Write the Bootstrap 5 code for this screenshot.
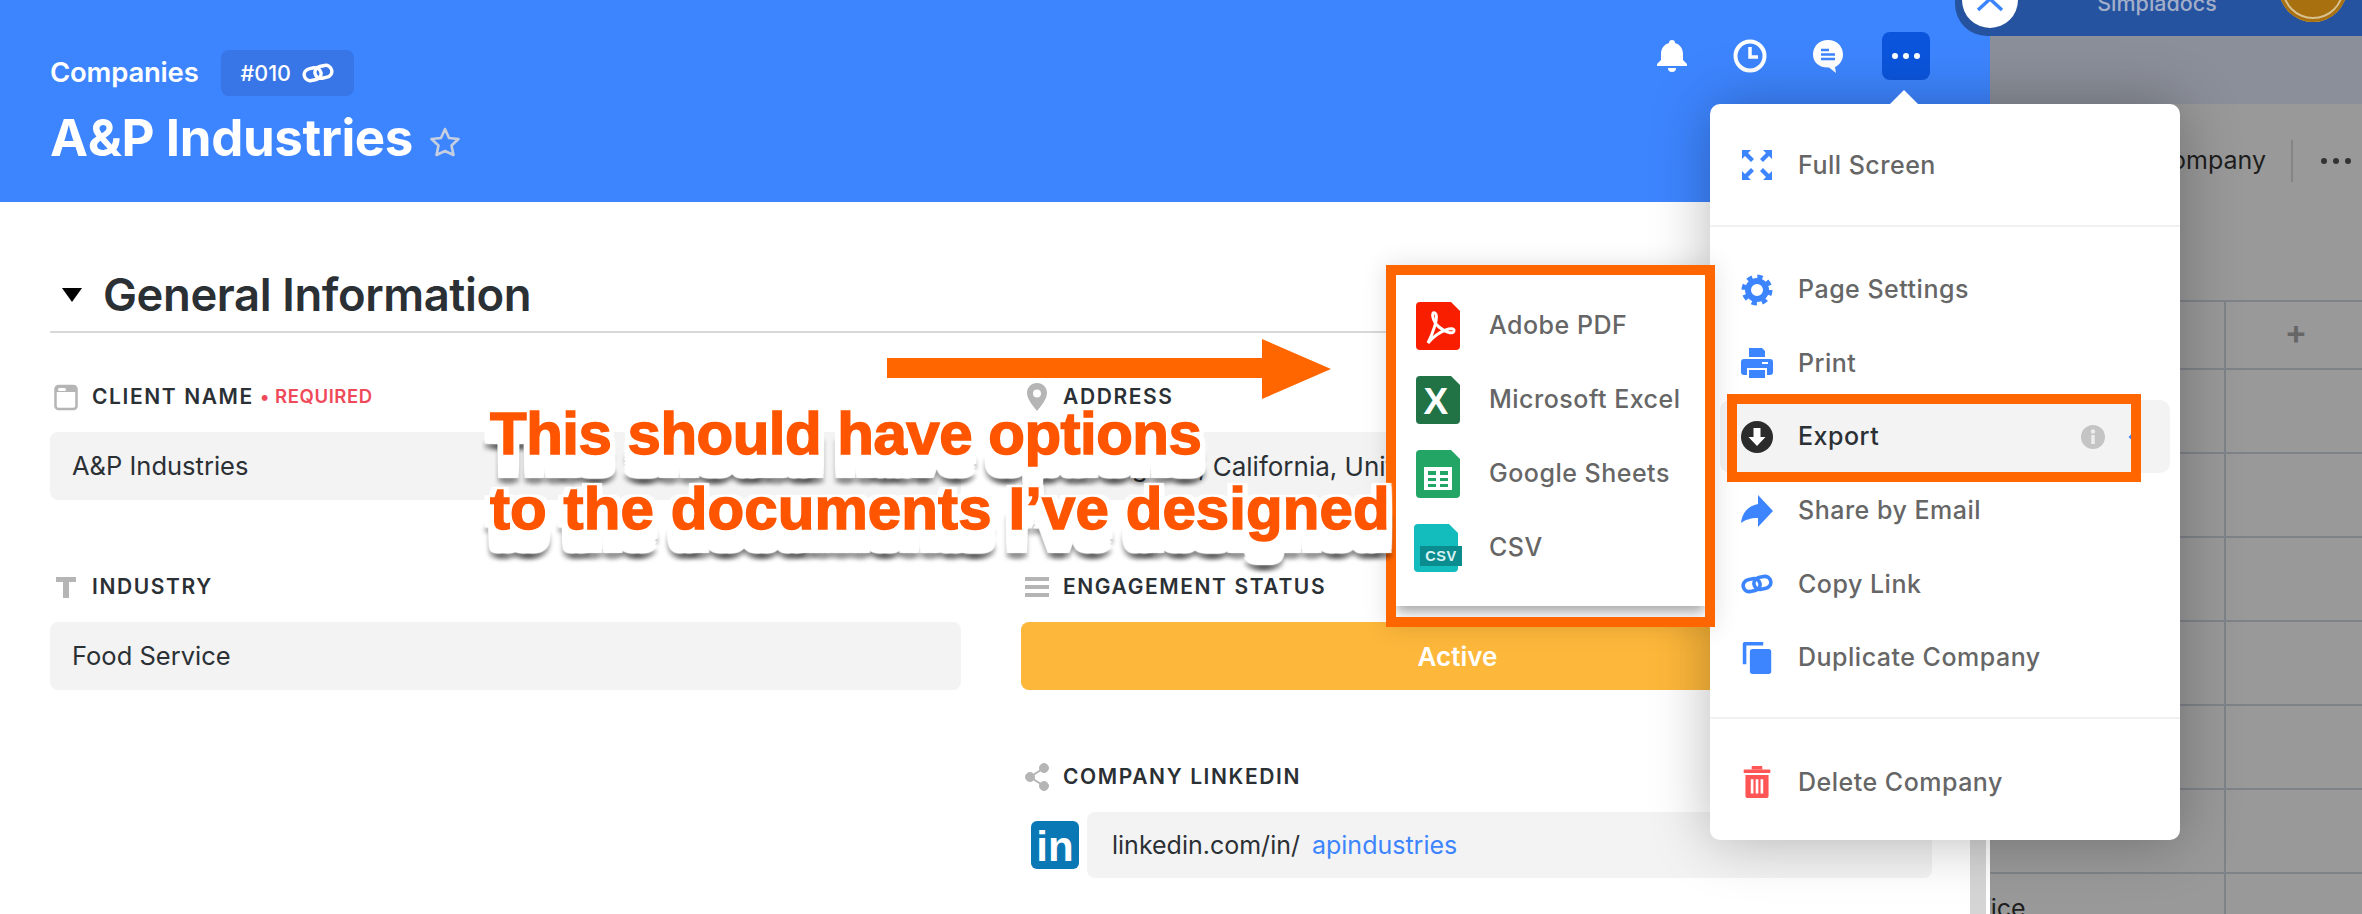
<!DOCTYPE html>
<html lang="en">
<head>
<meta charset="utf-8">
<title>A&amp;P Industries</title>
<link href="https://cdn.jsdelivr.net/npm/bootstrap@5.3.0/dist/css/bootstrap.min.css" rel="stylesheet">
<style>
body{margin:0;background:#999;font-family:Inter,"Liberation Sans",sans-serif;overflow:hidden}
.stage{position:relative;width:2362px;height:914px;overflow:hidden}
.sheet-panel{width:1990px;background:#fff;flex:none}
.sheet-head{height:202px;flex:none;background:#3d85ff;padding:32px 60px 0 50px;color:#fff}
.crumb-row{margin-top:18px}
.crumb{font-size:27.5px;font-weight:600;letter-spacing:-.2px}
.ref-tag{height:46px;background:#3875e6;border-radius:8px;padding:0 20px;font-size:21.5px;font-weight:500;margin-left:22px}
.ref-tag svg{margin-left:3px}
.page-title{font-size:51px;line-height:60px;font-weight:700;margin:12px 0 0;letter-spacing:-.4px}
.title-star{margin:8px 0 0 16px}
.head-ico{width:78px;height:48px}
.dots-btn{width:48px;height:48px;background:#0b55dd;border:0;border-radius:8px;padding:0;margin-left:15px}
.sheet-body{padding:66px 0 0 50px;flex:1;min-width:0}
.sec-title{font-size:45.4px;line-height:54px;font-weight:600;color:#2b3035;letter-spacing:-.4px;margin:0;padding-bottom:9px;border-bottom:2px solid #d8d8d8}
.sec-tri{width:20px;height:14px;margin:0 21px 0 12px}
.gen-row{--bs-gutter-x:60px;--bs-gutter-y:0;margin-top:50px}
.fld{height:190px}
.fld-label{height:28px;margin-bottom:21px;padding-left:4px;font-size:21px;font-weight:600;letter-spacing:1.6px;color:#2b3035;text-transform:uppercase}
.fld-label svg{width:24px;height:28px;margin-right:14px;flex:none}
.req{color:#ef4a5a;font-size:18.500px;font-weight:600;letter-spacing:.6px;margin-left:6px}
.fake-input{height:68px;background:#f3f3f3;border:0;border-radius:8px;padding:0 22px;font-size:25.5px;color:#2b3035}
.fake-input.addr{padding-left:26px;font-size:26px}
.fake-input.li-box{height:66px;padding-left:25px;padding-top:2px;font-size:25px;gap:12px}
.status-btn{height:68px;background:#fdb73a;color:#fff;font-size:26px;font-weight:600;border:0;border-radius:8px;padding:0 38px 0 0}
.status-btn:hover{background:#fdb73a;color:#fff}
.li-ico{width:48px;height:48px;margin:0 8px 0 10px;flex:none}
.li-handle{color:#3d85ff}
.track{width:16px;margin-left:38px;margin-right:4px;background:#d5d5d5;flex:none}
.back-col{flex:1;min-width:0;background:#999;overflow:hidden}
.back-strip{height:104px;background:#8b8f99;flex:none}
.back-tools{height:196px;flex:none;padding:0 10px 82px 0;font-size:25px;color:#1e1e1e}
.tool-sep{width:2px;height:42px;background:#858585;margin:0 27px 0 25px}
.grid-line{display:flex;flex:none;height:84px;border-top:2px solid #7e838a}
.grid-line.first{height:68px}
.grid-line.last{flex:1 0 auto;height:auto}
.grid-a{width:236px;border-right:2px solid #7e838a;flex:none;font-size:25px;color:#1e1e1e}
.grid-a.off{padding-top:16px;text-indent:-36px;white-space:nowrap}
.grid-b{flex:1;font-size:34px;color:#666;font-weight:600;line-height:1}
.grid-b.plus{padding:0 0 6px 4px}
.top-bar{position:absolute;left:1955px;top:0;width:407px;height:36px;background:#2553a0;border-bottom-left-radius:32px}
.top-close{position:absolute;left:7px;top:-28px;width:56px;height:56px;border-radius:50%;background:#fff;padding-bottom:16px}
.top-name{position:absolute;left:122px;top:-13px;width:160px;text-align:center;font-size:21.500px;font-weight:500;line-height:32px;color:#a2aec8}
.top-ava{position:absolute;left:324px;top:-46px;width:68px;height:68px;border-radius:50%;background:#a8700f;box-shadow:inset 0 0 0 3px #a8700f,inset 0 0 0 5px #d9c08f}
.act-menu{position:absolute;left:1710px;top:104px;width:470px;height:736px;display:block;margin:0;padding:24px 0 0;border:0;border-radius:10px;box-shadow:0 0 60px rgba(0,0,0,.28)}
.act-menu::before{content:"";position:absolute;left:180px;top:-14px;border:14px solid transparent;border-top:0;border-bottom-color:#fff}
.act-item{height:73.6px;padding:1px 21px 0;margin:0 10px;width:auto;font-size:25px;letter-spacing:.5px;font-weight:500;color:#666;border-radius:10px}
.act-item svg{width:32px;height:32px;flex:none;margin-right:25px}
.act-item.on{background:#f3f3f3;color:#2b3035}
.act-item.on .ml{margin-left:auto;margin-right:23px;width:24px;height:24px}
.act-item.on .ch{margin:0 13px 0 0;width:8px;height:12px}
.act-rule{margin:23px 0 26px;border-top:2px solid #f1f1f1;opacity:1}
.sub-frame{position:absolute;z-index:1002;left:1386px;top:265px;width:329px;height:362px;border:10px solid #ff6600;background:#fff;overflow:hidden;box-shadow:0 0 24px rgba(0,0,0,.12)}
.sub-list{height:331px;background:#fff;box-shadow:0 6px 12px rgba(0,0,0,.35);padding-top:13px}
.sub-item{height:74px;padding:2px 0 0 18px;font-size:25px;letter-spacing:.5px;font-weight:500;color:#666}
.sub-item svg{width:44px;height:48px;flex:none;margin:0 29px 0 2px}
.sub-item svg.wide{width:48px;margin:0 27px 0 0}
.exp-frame{position:absolute;z-index:1001;left:1727px;top:394px;width:414px;height:88px;border:10px solid #ff6600;pointer-events:none}
.note-arrow{position:absolute;z-index:1003;left:887px;top:339px;width:444px;height:60px}
.note-text{position:absolute;z-index:1003;left:490px;top:396px;margin:0;font-family:"Liberation Sans",Arial,sans-serif;font-weight:700;font-size:60px;line-height:75px;color:#ff5500;white-space:nowrap;-webkit-text-stroke:1.5px #ff5500;
text-shadow:-6px -3px 1px #fff,-3px -3px 1px #fff,3px -3px 1px #fff,6px -3px 1px #fff,
-6px 0 1px #fff,-3px 0 1px #fff,3px 0 1px #fff,6px 0 1px #fff,
-6px 4px 1px #fff,-3px 4px 1px #fff,3px 4px 1px #fff,6px 4px 1px #fff,
-6px 8px 1px #fff,-3px 8px 1px #fff,3px 8px 1px #fff,6px 8px 1px #fff,
-6px 12px 1px #fff,-3px 12px 1px #fff,3px 12px 1px #fff,6px 12px 1px #fff,
-6px 16px 1px #fff,-3px 16px 1px #fff,3px 16px 1px #fff,6px 16px 1px #fff,
-6px 20px 1px #fff,-3px 20px 1px #fff,3px 20px 1px #fff,6px 20px 1px #fff,
-6px 24px 1px #fff,-3px 24px 1px #fff,3px 24px 1px #fff,6px 24px 1px #fff,
-6px 29px 4px rgba(0,0,0,.35),0 30px 4px rgba(0,0,0,.35),6px 29px 4px rgba(0,0,0,.35)}
.note-a{letter-spacing:-.5px}
.note-b{letter-spacing:.1px}
</style>
</head>
<body>
<div class="stage d-flex">
  <section class="sheet-panel d-flex flex-column">
    <header class="sheet-head d-flex justify-content-between">
      <div>
        <div class="d-flex align-items-center crumb-row">
          <div class="crumb">Companies</div>
          <div class="ref-tag d-flex align-items-center gap-2">#010
            <svg width="32" height="20" viewBox="0 0 32 20" fill="none" stroke="#fff" stroke-width="3.4"><g transform="rotate(-12 16 10)"><rect x="2" y="4" width="17" height="12" rx="6"/><rect x="13" y="4" width="17" height="12" rx="6"/></g></svg>
          </div>
        </div>
        <h1 class="page-title d-flex align-items-center">A&amp;P Industries
          <svg class="title-star" width="32" height="34" viewBox="0 0 32 32" fill="none" stroke="#c6cfdf" stroke-width="2.6" stroke-linejoin="round"><path d="M16 3l4 9 9.500 1-7 6.500 2 9.500L16 25l-8.500 4 2-9.500-7-6.500 9.500-1z"/></svg>
        </h1>
      </div>
      <div class="d-flex align-items-center align-self-start">
        <div class="head-ico d-flex align-items-center justify-content-center"><svg width="34" height="34" viewBox="0 0 34 34" fill="#fff"><path d="M17 1a3 3 0 0 1 3 3c5 1.500 8 5.500 8 11v6l4 4v2H2v-2l4-4v-6c0-5.500 3-9.500 8-11a3 3 0 0 1 3-3z"/><path d="M13 29h8a4 4 0 0 1-8 0z"/></svg></div>
        <div class="head-ico d-flex align-items-center justify-content-center"><svg width="34" height="34" viewBox="0 0 34 34" fill="none" stroke="#fff" stroke-width="4"><circle cx="17" cy="17" r="14.500"/><path d="M17 8v10h8" stroke-width="3.500"/></svg></div>
        <div class="head-ico d-flex align-items-center justify-content-center"><svg width="32" height="34" viewBox="0 0 32 34"><path fill="#fff" d="M16 1c8.500 0 15 6 15 14.500 0 6-3.500 10.500-8 12.500l1 6-7-5.500C8 29 1 24 1 15.500 1 7 7.500 1 16 1z"/><path d="M9 11h8M9 15.500h14M9 20h14" stroke="#3d85ff" stroke-width="2.400"/></svg></div>
        <button class="dots-btn d-flex align-items-center justify-content-center" type="button" aria-label="More"><svg width="30" height="8" viewBox="0 0 30 8" fill="#fff"><circle cx="4" cy="4" r="3"/><circle cx="15" cy="4" r="3"/><circle cx="26" cy="4" r="3"/></svg></button>
      </div>
    </header>
    <div class="d-flex flex-grow-1 position-relative">
      <div class="sheet-body">
        <h2 class="sec-title d-flex align-items-center"><svg class="sec-tri" viewBox="0 0 20 14"><path d="M0 0h20L10 14z" fill="#000"/></svg>General Information</h2>
        <div class="row gen-row">
          <div class="col-6 fld">
            <div class="fld-label d-flex align-items-center"><svg viewBox="0 0 24 28" fill="none"><rect x="1.500" y="3" width="21" height="23" rx="3" stroke="#b5b5b5" stroke-width="2.500"/><path d="M2 9V5a2 2 0 0 1 2-2h16a2 2 0 0 1 2 2v4z" fill="#b5b5b5"/><rect x="4" y="5" width="8" height="3" rx="1.500" fill="#fff"/></svg>Client Name<span class="req">• REQUIRED</span></div>
            <div class="fake-input d-flex align-items-center">A&amp;P Industries</div>
          </div>
          <div class="col-6 fld">
            <div class="fld-label d-flex align-items-center"><svg viewBox="0 0 24 28"><path fill="#b5b5b5" fill-rule="evenodd" d="M12 0c6 0 10 4.500 10 10 0 6-6 13-10 18C8 23 2 16 2 10 2 4.500 6 0 12 0zm0 6.500a4 4 0 1 0 0 8 4 4 0 0 0 0-8z"/></svg>Address</div>
            <div class="fake-input addr d-flex align-items-center">Los Angeles, California, United States</div>
          </div>
          <div class="col-6 fld">
            <div class="fld-label d-flex align-items-center"><svg viewBox="0 0 24 28" fill="#b5b5b5"><rect x="2" y="4" width="20" height="5"/><rect x="9" y="4" width="6" height="21"/></svg>Industry</div>
            <div class="fake-input d-flex align-items-center">Food Service</div>
          </div>
          <div class="col-6 fld">
            <div class="fld-label d-flex align-items-center"><svg viewBox="0 0 24 28" fill="#b5b5b5"><rect y="4" width="24" height="4"/><rect y="12" width="24" height="4"/><rect y="20" width="24" height="4"/></svg>Engagement Status</div>
            <button class="btn status-btn w-100" type="button">Active</button>
          </div>
          <div class="col-6 fld"></div>
          <div class="col-6 fld">
            <div class="fld-label d-flex align-items-center"><svg viewBox="0 0 24 28" fill="#b5b5b5" stroke="#b5b5b5"><circle cx="19" cy="5" r="4.500"/><circle cx="5" cy="14" r="4.500"/><circle cx="19" cy="23" r="4.500"/><path d="M19 5L5 14l14 9" fill="none" stroke-width="2"/></svg>Company LinkedIn</div>
            <div class="d-flex align-items-center">
              <svg class="li-ico" viewBox="0 0 48 48"><rect width="48" height="48" rx="6" fill="#0a78b5"/><text x="24" y="40" text-anchor="middle" font-family="Liberation Sans" font-weight="700" font-size="42" fill="#fff">in</text></svg>
              <div class="fake-input li-box d-flex align-items-center flex-grow-1">linkedin.com/in/<span class="li-handle">apindustries</span></div>
            </div>
          </div>
        </div>
      </div>
      <div class="track"></div>
    </div>
  </section>
  <aside class="back-col d-flex flex-column">
    <div class="back-strip"></div>
    <div class="back-tools d-flex align-items-center justify-content-end">New Company<span class="tool-sep"></span>
      <svg width="32" height="8" viewBox="0 0 32 8" fill="#333"><circle cx="4" cy="4" r="3"/><circle cx="16" cy="4" r="3"/><circle cx="28" cy="4" r="3"/></svg></div>
    <div class="grid-line first"><div class="grid-a"></div><div class="grid-b plus d-flex align-items-center justify-content-center">+</div></div>
    <div class="grid-line"><div class="grid-a"></div><div class="grid-b"></div></div>
    <div class="grid-line"><div class="grid-a"></div><div class="grid-b"></div></div>
    <div class="grid-line"><div class="grid-a"></div><div class="grid-b"></div></div>
    <div class="grid-line"><div class="grid-a"></div><div class="grid-b"></div></div>
    <div class="grid-line"><div class="grid-a"></div><div class="grid-b"></div></div>
    <div class="grid-line"><div class="grid-a"></div><div class="grid-b"></div></div>
    <div class="grid-line last"><div class="grid-a off">Office</div><div class="grid-b"></div></div>
  </aside>

  <div class="top-bar">
    <div class="top-close d-flex align-items-end justify-content-center"><svg width="30" height="16" viewBox="0 0 30 16" fill="none" stroke="#3d85ff" stroke-width="3.500"><path d="M3 14L15 3l12 11"/></svg></div>
    <div class="top-name">Simpladocs</div>
    <div class="top-ava"></div>
  </div>

  <div class="dropdown-menu show act-menu">
    <a class="dropdown-item act-item d-flex align-items-center" href="#"><svg viewBox="0 0 32 32" fill="#3d85ff"><path d="M1 1h9L7 4l6 6-3 3-6-6-3 3zM31 1v9l-3-3-6 6-3-3 6-6-3-3zM1 31v-9l3 3 6-6 3 3-6 6 3 3zM31 31h-9l3-3-6-6 3-3 6 6 3-3z"/></svg>Full Screen</a>
    <hr class="dropdown-divider act-rule">
    <a class="dropdown-item act-item d-flex align-items-center" href="#"><svg viewBox="0 0 32 32" fill="none" stroke="#3d85ff"><circle cx="16" cy="16" r="9" stroke-width="6"/><circle cx="16" cy="16" r="13" stroke-width="5" stroke-dasharray="5.200 5"/></svg>Page Settings</a>
    <a class="dropdown-item act-item d-flex align-items-center" href="#"><svg viewBox="0 0 32 32" fill="#3d85ff"><path d="M8 1h13l3 3v6H8z"/><path d="M3 12h26a3 3 0 0 1 3 3v10a3 3 0 0 1-3 3h-3v-7H6v7H3a3 3 0 0 1-3-3V15a3 3 0 0 1 3-3z"/><path d="M8 23h16v8H8z"/><rect x="21" y="15" width="6" height="2" fill="#fff"/></svg>Print</a>
    <a class="dropdown-item act-item on d-flex align-items-center" href="#"><svg viewBox="0 0 32 32"><circle cx="16" cy="16" r="16" fill="#2b2b2b"/><path d="M12.500 7h7v9h5L16 25 7.500 16h5z" fill="#fff"/></svg>Export
      <svg class="ml" viewBox="0 0 24 24"><circle cx="12" cy="12" r="12" fill="#c4c4c4"/><rect x="10.200" y="10" width="3.600" height="9" fill="#ececec"/><circle cx="12" cy="6.500" r="2.200" fill="#ececec"/></svg>
      <svg class="ch" viewBox="0 0 8 12" fill="none" stroke="#3d85ff" stroke-width="2"><path d="M7 1L2 6l5 5"/></svg></a>
    <a class="dropdown-item act-item d-flex align-items-center" href="#"><svg viewBox="0 0 32 32" fill="#3d85ff"><path d="M17 0l15 16-15 16v-9C9 23 4 25 0 28c1-9 6-17 17-19z"/></svg>Share by Email</a>
    <a class="dropdown-item act-item d-flex align-items-center" href="#"><svg viewBox="0 0 32 20" fill="none" stroke="#3d85ff" stroke-width="3.600"><g transform="rotate(-12 16 10)"><rect x="2" y="4" width="17" height="12" rx="6"/><rect x="13" y="4" width="17" height="12" rx="6"/></g></svg>Copy Link</a>
    <a class="dropdown-item act-item d-flex align-items-center" href="#"><svg viewBox="0 0 32 36" fill="#3d85ff"><path d="M0 2a2 2 0 0 1 2-2h21v4H4v21H0z"/><rect x="8" y="8" width="24" height="28" rx="3"/></svg>Duplicate Company</a>
    <hr class="dropdown-divider act-rule">
    <a class="dropdown-item act-item d-flex align-items-center" href="#"><svg viewBox="0 0 32 36" fill="#f55"><rect x="10" width="12" height="4" rx="1"/><rect x="1" y="4" width="30" height="4" rx="1"/><path fill-rule="evenodd" d="M3 10h26v24a2 2 0 0 1-2 2H5a2 2 0 0 1-2-2zm6 5v16h3V15zm5.500 0v16h3V15zm5.500 0v16h3V15z"/></svg>Delete Company</a>
  </div>

  <div class="exp-frame"></div>

  <div class="sub-frame">
    <div class="sub-list">
      <div class="sub-item d-flex align-items-center"><svg viewBox="0 0 44 48"><path d="M4 0h31l9 9v35a4 4 0 0 1-4 4H4a4 4 0 0 1-4-4V4a4 4 0 0 1 4-4z" fill="#fa1e00"/><path d="M12 41c3-6 12-27 7-30-4-2-3 8 4 14 6 5 14 8 15 4 1-5-14-2-26 12z" fill="none" stroke="#fff" stroke-width="3"/></svg>Adobe PDF</div>
      <div class="sub-item d-flex align-items-center"><svg viewBox="0 0 44 48"><path d="M4 0h31l9 9v35a4 4 0 0 1-4 4H4a4 4 0 0 1-4-4V4a4 4 0 0 1 4-4z" fill="#217346"/><text x="20" y="38" text-anchor="middle" font-family="Liberation Sans" font-weight="700" font-size="37" fill="#fff">X</text></svg>Microsoft Excel</div>
      <div class="sub-item d-flex align-items-center"><svg viewBox="0 0 44 48"><path d="M4 0h31l9 9v35a4 4 0 0 1-4 4H4a4 4 0 0 1-4-4V4a4 4 0 0 1 4-4z" fill="#23a566"/><path fill="#fff" fill-rule="evenodd" d="M8 17h28v23H8zm4 4v4h8v-4zm12 0v4h8v-4zm-12 7v3h8v-3zm12 0v3h8v-3zm-12 6v3h8v-3zm12 0v3h8v-3z"/></svg>Google Sheets</div>
      <div class="sub-item d-flex align-items-center"><svg class="wide" viewBox="0 0 48 48"><path d="M4 0h31l9 9v35a4 4 0 0 1-4 4H4a4 4 0 0 1-4-4V4a4 4 0 0 1 4-4z" fill="#14bdbd"/><rect x="6" y="22" width="42" height="20" fill="#0b8c8f"/><text x="27" y="37" text-anchor="middle" font-family="Liberation Sans" font-weight="700" font-size="14.500" letter-spacing=".6" fill="#d8f3f3">CSV</text></svg>CSV</div>
    </div>
  </div>

  <svg class="note-arrow" viewBox="0 0 444 60"><path d="M0 19h375V0l69 30-69 30V39H0z" fill="#ff6600"/></svg>
  <p class="note-text"><span class="note-a">This should have options</span><br><span class="note-b">to the documents I’ve designed</span></p>
</div>
<script src="https://cdn.jsdelivr.net/npm/bootstrap@5.3.0/dist/js/bootstrap.bundle.min.js"></script>
</body>
</html>
